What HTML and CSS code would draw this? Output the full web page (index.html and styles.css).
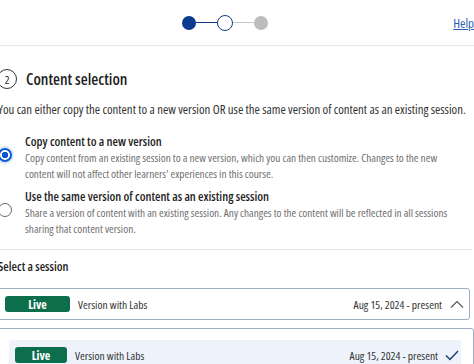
FILE: index.html
```html
<!DOCTYPE html>
<html lang="en">
<head>
    <meta charset="UTF-8">
    <meta name="viewport" content="width=device-width, initial-scale=1.0">
    <title>Content selection</title>
    <link rel="stylesheet" href="styles.css">
</head>
<body>
    <div class="page">
        <!-- Stepper header -->
        <header class="topbar">
            <div class="stepper">
                <span class="step done"></span>
                <span class="step-line done"></span>
                <span class="step current"></span>
                <span class="step-line"></span>
                <span class="step"></span>
            </div>
            <a class="help-link" href="#">Help</a>
        </header>

        <main class="content">
            <div class="section-title">
                <span class="step-number">2</span>
                <h2>Content selection</h2>
            </div>
            <p class="intro">You can either copy the content to a new version OR use the same version of content as an existing session.</p>

            <div class="options">
                <label class="option">
                    <span class="radio checked"></span>
                    <span class="option-text">
                        <span class="option-label">Copy content to a new version</span>
                        <span class="option-desc">Copy content from an existing session to a new version, which you can then customize. Changes to the new content will not affect other learners' experiences in this course.</span>
                    </span>
                </label>
                <label class="option">
                    <span class="radio"></span>
                    <span class="option-text">
                        <span class="option-label">Use the same version of content as an existing session</span>
                        <span class="option-desc">Share a version of content with an existing session. Any changes to the content will be reflected in all sessions sharing that content version.</span>
                    </span>
                </label>
            </div>

            <div class="session-block">
                <h3>Select a session</h3>

                <div class="session-header">
                    <span class="badge wide">Live</span>
                    <span class="session-name">Version with Labs</span>
                    <span class="session-date">Aug 15, 2024 - present</span>
                    <svg class="chevron" width="14" height="8" viewBox="0 0 14 8"><path d="M1 7.5 L7 1.5 L13 7.5" fill="none" stroke="#555" stroke-width="1.2"/></svg>
                </div>

                <div class="session-panel">
                    <div class="session-row selected">
                        <span class="badge">Live</span>
                        <span class="session-name">Version with Labs</span>
                        <span class="session-date">Aug 15, 2024 - present</span>
                        <svg class="check" width="14" height="11" viewBox="0 0 14 11"><path d="M1 5.5 L5 9.5 L13 1" fill="none" stroke="#1d3f7a" stroke-width="1.5"/></svg>
                    </div>
                </div>
            </div>
        </main>
    </div>
</body>
</html>
```

FILE: styles.css
```css
:root {
    --navy: #0b3a8e;
    --blue: #0a57d1;
    --link: #2b5fb3;
    --text: #1f1f1f;
    --text-body: #333333;
    --text-muted: #6f6f6f;
    --divider: #e6e6e6;
    --card-border: #9cacc4;
    --live-green: #0d6e4c;
    --row-selected: #eef3fb;
}

* {
    margin: 0;
    padding: 0;
    box-sizing: border-box;
}

body {
    font-family: "Open Sans", Lato, sans-serif;
    font-stretch: 80%;
    color: var(--text);
    background: #ffffff;
    overflow: hidden;
}

.page {
    width: 490px;
}

/* Stepper header */
.topbar {
    display: flex;
    align-items: center;
    height: 46px;
    border-bottom: 1px solid var(--divider);
    padding-left: 182px;
}

.stepper {
    display: flex;
    align-items: center;
}

.step {
    width: 14px;
    height: 14px;
    border-radius: 50%;
    background: #bdbdbd;
}

.step.done {
    background: var(--navy);
}

.step.current {
    width: 16px;
    height: 16px;
    background: #ffffff;
    border: 1.5px solid var(--navy);
}

.step-line {
    width: 21px;
    height: 1.5px;
    background: #c8c8c8;
}

.step-line.done {
    background: var(--navy);
}

.help-link {
    margin-left: auto;
    margin-right: 16px;
    font-size: 13px;
    color: var(--link);
    text-decoration: underline;
}

/* Main content */
.content {
    margin-left: -2px;
    width: 474px;
}

.section-title {
    display: flex;
    align-items: center;
    gap: 9px;
    margin-top: 22px;
    margin-left: -1px;
}

.step-number {
    width: 20px;
    height: 20px;
    border: 1.3px solid #333;
    border-radius: 50%;
    font-size: 11px;
    display: flex;
    justify-content: center;
    align-items: center;
    color: var(--text);
}

.section-title h2 {
    font-size: 16px;
    font-weight: 600;
    color: var(--text);
}

.intro {
    font-size: 12.8px;
    line-height: 16px;
    color: var(--text-body);
    margin-top: 11px;
    white-space: nowrap;
}

.options {
    margin-top: 17px;
    display: flex;
    flex-direction: column;
    gap: 7px;
}

.option {
    display: flex;
    align-items: center;
    gap: 13px;
}

.radio {
    flex: none;
    width: 14px;
    height: 14px;
    border-radius: 50%;
    border: 1.5px solid #666;
    margin-bottom: 7px;
}

.radio.checked {
    border: 2px solid var(--blue);
    background: radial-gradient(circle, var(--blue) 0 3px, #ffffff 3.5px);
    box-shadow: 0 0 0 2px rgba(10, 87, 209, 0.15);
}

.option-text {
    display: flex;
    flex-direction: column;
    line-height: 16px;
}

.option-label {
    font-size: 12.5px;
    font-weight: 600;
    color: var(--text);
}

.option-desc {
    font-size: 11.3px;
    color: var(--text-muted);
    padding-right: 20px;
}

/* Session selection */
.session-block {
    margin-top: 12px;
    border-top: 1px solid var(--divider);
    padding-top: 9px;
}

.session-block h3 {
    font-size: 12.5px;
    font-weight: 600;
    line-height: 16px;
    color: var(--text);
}

.session-header {
    display: flex;
    align-items: center;
    height: 32px;
    margin-top: 13px;
    margin-left: -4px;
    width: 476px;
    border: 1px solid var(--card-border);
    border-radius: 3px;
    padding: 0 5px 0 10px;
}

.badge {
    display: flex;
    justify-content: center;
    align-items: center;
    width: 52px;
    height: 16px;
    border-radius: 3px;
    background: var(--live-green);
    color: #ffffff;
    font-size: 12px;
    font-weight: 700;
}

.badge.wide {
    width: 65px;
}

.session-name {
    margin-left: 8px;
    font-size: 11.5px;
    color: var(--text-body);
}

.session-date {
    margin-left: auto;
    font-size: 11.5px;
    color: var(--text-body);
}

.chevron {
    margin-left: 8px;
}

.session-panel {
    margin-top: 8px;
    margin-left: -4px;
    width: 480px;
    border: 1px solid var(--card-border);
    border-radius: 3px;
    padding: 11px 12px 12px 14px;
}

.session-row {
    display: flex;
    align-items: center;
    height: 30px;
    padding: 0 2px 0 6px;
    border-radius: 3px;
}

.session-row.selected {
    background: var(--row-selected);
}

.check {
    margin-left: 7px;
}
```
